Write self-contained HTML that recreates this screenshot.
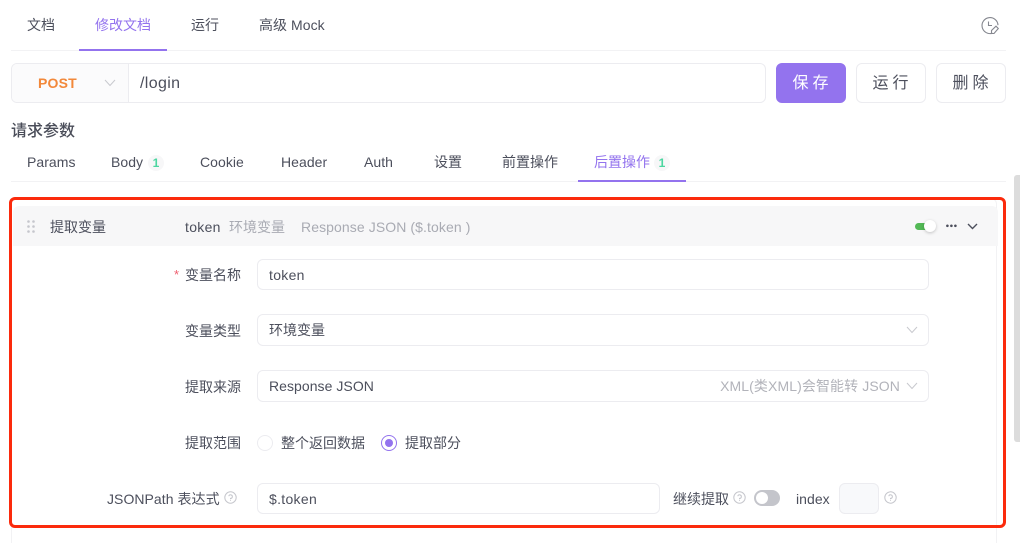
<!DOCTYPE html>
<html lang="zh"><head><meta charset="utf-8">
<style>
html,body{margin:0;padding:0;width:1020px;height:543px;overflow:hidden;background:#fff}
body{position:relative;font-family:"Liberation Sans","Noto Sans CJK SC",sans-serif;font-size:14px;color:#4c4f5c}
.a{position:absolute;white-space:nowrap;line-height:20px}
.b{position:absolute;box-sizing:border-box}
.l{letter-spacing:.05px}
.t{letter-spacing:.3px}
.inp{position:absolute;box-sizing:border-box;left:257px;border:1px solid #ececf0;border-radius:6px;background:#fff}
.lab{position:absolute;white-space:nowrap;line-height:20px;text-align:right;width:200px}
.btn{position:absolute;box-sizing:border-box;top:63px;width:70px;height:40px;border-radius:6px;border:1px solid #ececf0;text-align:center;line-height:40px;font-size:16px;letter-spacing:4px;padding-left:3px}
.badge{position:absolute;width:16px;height:16px;border-radius:8px;background:#f7f7f8;color:#4cd6a0;font-size:12px;line-height:16px;text-align:center;font-weight:700}
svg{position:absolute;overflow:visible}
.q circle,.q path{fill:none;stroke:#c5c6cc;stroke-width:1}
</style></head><body>

<div class="a" style="left:27px;top:15px">文档</div>
<div class="a" style="left:95px;top:15px;color:#9373ee">修改文档</div>
<div class="a" style="left:191px;top:15px">运行</div>
<div class="a l" style="left:259px;top:15px">高级 Mock</div>
<div class="b" style="left:11px;top:50px;width:995px;height:1px;background:#f2f2f4"></div>
<div class="b" style="left:79px;top:49px;width:88px;height:2px;background:#9373ee"></div>
<svg style="left:981px;top:17px" width="18" height="18" viewBox="0 0 18 18" fill="none" stroke="#85878f" stroke-width="1.1"><path d="M11.5 16.2A8 8 0 1 1 17 8.2"/><path d="M7.5 4.5V8.5H11"/><path d="M10.5 16.5V13.5L15 9.2L17.3 11.5L13 16.5Z"/></svg>

<div class="b" style="left:11px;top:63px;width:755px;height:40px;border:1px solid #ececf0;border-radius:6px;background:#fff"></div>
<div class="b" style="left:12px;top:64px;width:117px;height:38px;background:#fbfbfc;border-right:1px solid #ececf0;border-radius:5px 0 0 5px"></div>
<div class="a" style="left:38px;top:73px;color:#f2883a;font-weight:700;letter-spacing:.2px">POST</div>
<svg style="left:104px;top:79px" width="12" height="8" viewBox="0 0 12 8" fill="none" stroke="#c8c9ce" stroke-width="1"><path d="M1 1L6 6.5L11 1"/></svg>
<div class="a" style="left:140px;top:74px;font-size:16px;letter-spacing:.35px">/login</div>

<div class="btn" style="left:776px;background:#9373ee;border-color:#9373ee;color:#fff">保存</div>
<div class="btn" style="left:856px">运行</div>
<div class="btn" style="left:936px">删除</div>

<div class="a" style="left:11px;top:122px;font-size:16px;font-weight:500;color:#4a4d59">请求参数</div>
<div class="a l" style="left:27px;top:152px">Params</div>
<div class="a l" style="left:111px;top:152px">Body</div>
<div class="badge" style="left:148px;top:155px">1</div>
<div class="a l" style="left:200px;top:152px">Cookie</div>
<div class="a l" style="left:281px;top:152px">Header</div>
<div class="a l" style="left:364px;top:152px">Auth</div>
<div class="a" style="left:434px;top:152px">设置</div>
<div class="a" style="left:502px;top:152px">前置操作</div>
<div class="a" style="left:594px;top:152px;color:#9373ee">后置操作</div>
<div class="badge" style="left:654px;top:155px">1</div>
<div class="b" style="left:11px;top:181px;width:995px;height:1px;background:#f2f2f4"></div>
<div class="b" style="left:578px;top:180px;width:108px;height:2px;background:#9373ee"></div>

<div class="b" style="left:1014px;top:175px;width:6px;height:267px;background:#dcdcdc;border-radius:3px 0 0 3px"></div>

<div class="b" style="left:11px;top:198px;width:986px;height:345px;border:1px solid #f2f2f4;border-bottom:0;border-radius:6px 6px 0 0"></div>
<div class="b" style="left:13px;top:206px;width:985px;height:40px;background:#f7f7f8;border-radius:6px 6px 0 0"></div>

<svg style="left:27px;top:220px" width="8" height="13" fill="#c5c6cc"><circle cx="1.5" cy="1.5" r="1.3"/><circle cx="6.5" cy="1.5" r="1.3"/><circle cx="1.5" cy="6.5" r="1.3"/><circle cx="6.5" cy="6.5" r="1.3"/><circle cx="1.5" cy="11.5" r="1.3"/><circle cx="6.5" cy="11.5" r="1.3"/></svg>
<div class="a" style="left:50px;top:217px">提取变量</div>
<div class="a t" style="left:185px;top:217px">token</div>
<div class="a" style="left:229px;top:217px;color:#a9abb3">环境变量</div>
<div class="a" style="left:301px;top:217px;color:#a9abb3;letter-spacing:.09px">Response JSON ($.token )</div>

<div class="b" style="left:915px;top:223px;width:20px;height:7px;background:#53b956;border-radius:4px"></div>
<div class="b" style="left:924px;top:220px;width:12px;height:12px;background:#fff;border-radius:50%;box-shadow:0 1px 3px rgba(0,0,0,.22)"></div>
<svg style="left:946px;top:224px" width="11" height="4" fill="#4c4f5c"><circle cx="1.4" cy="1.8" r="1.3"/><circle cx="5.4" cy="1.8" r="1.3"/><circle cx="9.4" cy="1.8" r="1.3"/></svg>
<svg style="left:967px;top:223px" width="11" height="7" fill="none" stroke="#4c4f5c" stroke-width="1.4"><path d="M1 1L5.5 5.5L10 1"/></svg>

<div class="a" style="left:174px;top:265px;color:#ef5d6e;font-size:13px">*</div>
<div class="lab" style="left:41px;top:265px">变量名称</div>
<div class="inp" style="top:259px;width:672px;height:31px"></div>
<div class="a t" style="left:269px;top:265px">token</div>

<div class="lab" style="left:41px;top:321px">变量类型</div>
<div class="inp" style="top:314px;width:672px;height:32px"></div>
<div class="a" style="left:269px;top:320px">环境变量</div>
<svg style="left:906px;top:326px" width="12" height="8" fill="none" stroke="#c8c9ce" stroke-width="1"><path d="M1 1L6 6.5L11 1"/></svg>

<div class="lab" style="left:41px;top:377px">提取来源</div>
<div class="inp" style="top:370px;width:672px;height:32px"></div>
<div class="a l" style="left:269px;top:376px">Response JSON</div>
<div class="a" style="right:120px;top:376px;color:#b2b3ba;letter-spacing:.1px">XML(类XML)会智能转 JSON</div>
<svg style="left:906px;top:382px" width="12" height="8" fill="none" stroke="#c8c9ce" stroke-width="1"><path d="M1 1L6 6.5L11 1"/></svg>

<div class="lab" style="left:41px;top:433px">提取范围</div>
<div class="b" style="left:257px;top:435px;width:16px;height:16px;border:1px solid #ececf0;border-radius:50%"></div>
<div class="a" style="left:281px;top:433px">整个返回数据</div>
<div class="b" style="left:381px;top:435px;width:16px;height:16px;border:1px solid #9373ee;border-radius:50%"></div>
<div class="b" style="left:385px;top:439px;width:8px;height:8px;background:#9373ee;border-radius:50%"></div>
<div class="a" style="left:405px;top:433px">提取部分</div>

<div class="a l" style="left:107px;top:489px">JSONPath 表达式</div>
<svg class="q" style="left:224px;top:491px" width="13" height="13"><circle cx="6.5" cy="6.5" r="5.7"/><path d="M4.8 5.2A1.8 1.8 0 1 1 6.5 7.4V8.2M6.5 9.2V10"/></svg>
<div class="inp" style="top:483px;width:403px;height:31px"></div>
<div class="a t" style="left:269px;top:489px">$.token</div>
<div class="a" style="left:673px;top:489px">继续提取</div>
<svg class="q" style="left:733px;top:491px" width="13" height="13"><circle cx="6.5" cy="6.5" r="5.7"/><path d="M4.8 5.2A1.8 1.8 0 1 1 6.5 7.4V8.2M6.5 9.2V10"/></svg>
<div class="b" style="left:754px;top:490px;width:26px;height:16px;background:#c4c5cb;border-radius:8px"></div>
<div class="b" style="left:756px;top:492px;width:12px;height:12px;background:#fff;border-radius:50%"></div>
<div class="a l" style="left:796px;top:489px">index</div>
<div class="b" style="left:839px;top:483px;width:40px;height:31px;background:#f8f9fb;border:1px solid #ececf0;border-radius:6px"></div>
<svg class="q" style="left:884px;top:491px" width="13" height="13"><circle cx="6.5" cy="6.5" r="5.7"/><path d="M4.8 5.2A1.8 1.8 0 1 1 6.5 7.4V8.2M6.5 9.2V10"/></svg>

<div class="b" style="left:9px;top:197px;width:997px;height:331px;border:3px solid #fb2a0c;border-radius:6px"></div>
</body></html>
